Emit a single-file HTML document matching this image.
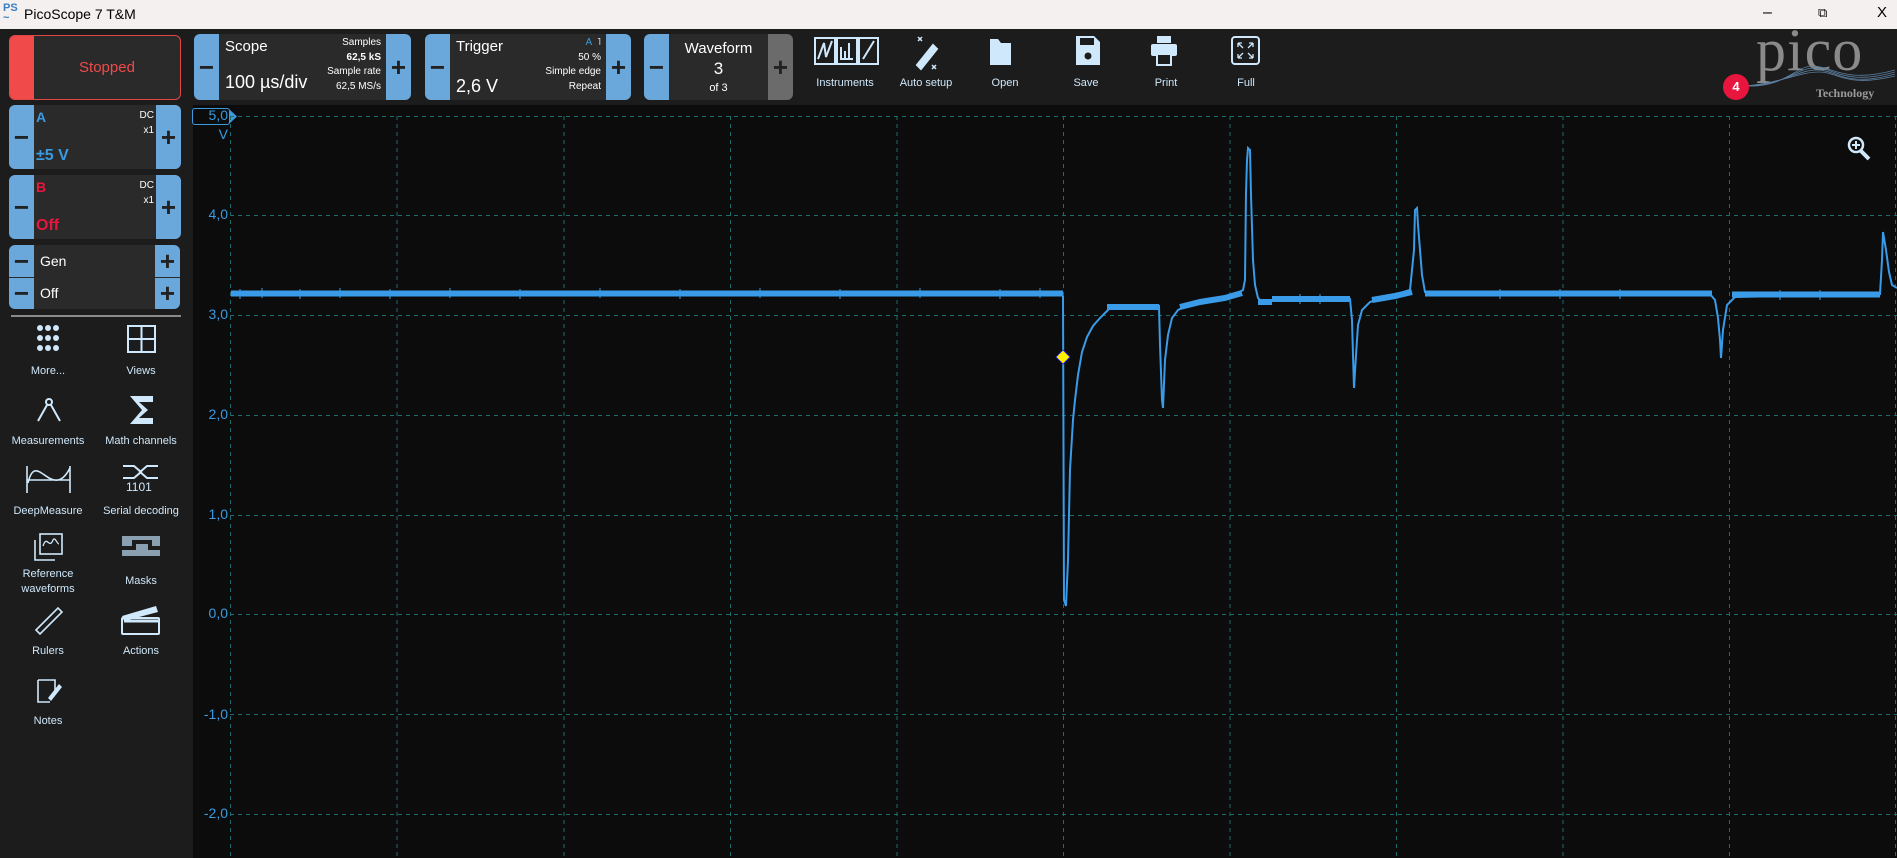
<!DOCTYPE html>
<html><head><meta charset="utf-8"><style>
*{margin:0;padding:0;box-sizing:border-box}
body{width:1897px;height:858px;overflow:hidden;background:#1c1c1c;font-family:"Liberation Sans",sans-serif;position:relative;color:#fff}
.a{position:absolute}
.title{left:0;top:0;width:1897px;height:29px;background:#f3f0ef;color:#000;font-size:14px}
.box{position:absolute;background:#2a2a2a;border-radius:6px;overflow:hidden}
.bl{position:absolute;top:0;bottom:0;background:#6aa8dc;color:#222;font-size:26px;display:flex;align-items:center;justify-content:center;font-weight:bold}
.t{position:absolute;white-space:nowrap}
.lbl{position:absolute;color:#cfe8fb;font-size:11px;text-align:center;width:90px;white-space:nowrap}
.ax{position:absolute;color:#3a9be0;font-size:14px;text-align:right;width:40px}
</style></head><body>
<div class="a title">
<div class="t" style="left:3px;top:3px;color:#3a7fc0;font-size:11px;font-weight:bold;line-height:10px">PS<br>~</div>
<div class="t" style="left:24px;top:6px">PicoScope 7 T&amp;M</div>
<div class="t" style="left:1763px;top:4px;font-size:16px">–</div>
<div class="t" style="left:1818px;top:5px;font-size:13px">⧉</div>
<div class="t" style="left:1877px;top:4px;font-size:15px">X</div>
</div>

<div class="a" style="left:193px;top:105px;width:1704px;height:753px;background:#0c0c0c"></div>

<div class="box" style="left:9px;top:35px;width:172px;height:65px;border:1px solid #e04848;background:#2a2a2a">
<div class="a" style="left:0;top:0;bottom:0;width:24px;background:#f14a4a"></div>
<div class="t" style="left:24px;right:0;top:23px;text-align:center;color:#f14a4a;font-size:15px">Stopped</div></div>

<div class="box" style="left:194px;top:34px;width:217px;height:66px">
<div class="bl" style="left:0;width:25px">−</div><div class="bl" style="right:0;width:25px">+</div>
<div class="t" style="left:31px;top:4px;font-size:15px">Scope</div>
<div class="t" style="left:31px;top:38px;font-size:18px">100 µs/div</div>
<div class="t" style="right:30px;top:2px;font-size:10px;text-align:right;line-height:14.5px">Samples<br><b>62,5 kS</b><br>Sample rate<br>62,5 MS/s</div></div>

<div class="box" style="left:425px;top:34px;width:206px;height:66px">
<div class="bl" style="left:0;width:25px">−</div><div class="bl" style="right:0;width:25px">+</div>
<div class="t" style="left:31px;top:4px;font-size:15px">Trigger</div>
<div class="t" style="left:31px;top:42px;font-size:18px">2,6 V</div>
<div class="t" style="right:30px;top:2px;font-size:10px;text-align:right;line-height:14.5px"><span style="color:#3a9be0">A</span> &nbsp;˥<br>50 %<br>Simple edge<br>Repeat</div></div>

<div class="box" style="left:644px;top:34px;width:149px;height:66px">
<div class="bl" style="left:0;width:25px">−</div><div class="bl" style="right:0;width:25px;background:#6b6b6b">+</div>
<div class="t" style="left:25px;right:25px;top:6px;text-align:center;font-size:15px">Waveform</div>
<div class="t" style="left:25px;right:25px;top:25px;text-align:center;font-size:17px">3</div>
<div class="t" style="left:25px;right:25px;top:48px;text-align:center;font-size:11px">of 3</div></div>

<svg class="a" style="left:800px;top:29px" width="480" height="50" viewBox="0 0 480 50" fill="none" stroke="#cfe8fb" stroke-width="2">
<rect x="15" y="9" width="20" height="26"/><rect x="37" y="9" width="20" height="26"/><rect x="59" y="9" width="19" height="26"/>
<path d="M18 30 L24 14 L26 28 L32 12"/><path d="M41 30 V18 M45 30 V22 M49 30 V14 M53 30 H40"/><path d="M63 30 L74 12"/>
<path d="M117 36 L133 16 L137 20 L121 40 Z" fill="#cfe8fb"/><path d="M118 8 l4 4 m0-4 l-4 4 M132 36 l4 4 m0-4 l-4 4" stroke-width="1.5"/>
<path d="M190 10 h8 l3 4 h10 v22 h-21 Z" fill="#cfe8fb" stroke="none"/>
<path d="M276 7 h18 l6 6 v23 h-24 Z" fill="#cfe8fb" stroke="none"/><circle cx="288" cy="27" r="3.5" fill="#1c1c1c" stroke="none"/><rect x="280" y="9" width="14" height="7" fill="#1c1c1c" stroke="none"/>
<rect x="357" y="7" width="14" height="7" fill="#cfe8fb" stroke="none"/><rect x="351" y="15" width="26" height="12" rx="2" fill="#cfe8fb" stroke="none"/><rect x="357" y="25" width="14" height="11" fill="#1c1c1c" stroke="#cfe8fb"/>
<rect x="432" y="8" width="27" height="27" rx="3"/><path d="M438 14 l5 5 M438 14 h4 M438 14 v4 M453 14 l-5 5 M453 14 h-4 M453 14 v4 M438 29 l5-5 M438 29 h4 M438 29 v-4 M453 29 l-5-5 M453 29 h-4 M453 29 v-4" stroke-width="1.3"/>
</svg>
<div class="lbl" style="left:800px;top:77px">Instruments</div>
<div class="lbl" style="left:881px;top:77px">Auto setup</div>
<div class="lbl" style="left:960px;top:77px">Open</div>
<div class="lbl" style="left:1041px;top:77px">Save</div>
<div class="lbl" style="left:1121px;top:77px">Print</div>
<div class="lbl" style="left:1201px;top:77px">Full</div>

<div class="t" style="left:1756px;top:20px;font-family:'Liberation Serif',serif;font-size:60px;line-height:60px;color:#8a8a8a;letter-spacing:1px">pico</div>
<svg class="a" style="left:1745px;top:66px" width="152" height="26"><g fill="none" stroke="#5b7e9e" stroke-width="0.8">
<path d="M0 20 C40 20 50 2 70 2 S100 20 150 6"/><path d="M0 20 C40 18 52 4 72 4 S100 22 150 8"/><path d="M0 20 C40 16 54 6 74 6 S100 22 150 10"/><path d="M0 20 C40 22 50 0 68 0 S100 18 150 4"/></g></svg>
<div class="t" style="left:1816px;top:86px;font-family:'Liberation Serif',serif;font-size:12px;color:#9a9a9a;font-weight:bold">Technology</div>
<div class="a" style="left:1723px;top:74px;width:26px;height:26px;border-radius:50%;background:#e8163e;color:#fff;font-size:13px;font-weight:bold;text-align:center;line-height:26px">4</div>

<div class="box" style="left:9px;top:105px;width:172px;height:64px">
<div class="bl" style="left:0;width:25px">−</div><div class="bl" style="right:0;width:25px">+</div>
<div class="t" style="left:27px;top:4px;color:#3a9be0;font-size:14px;font-weight:bold">A</div>
<div class="t" style="left:27px;top:42px;color:#3a9be0;font-size:16px;font-weight:bold">±5 V</div>
<div class="t" style="right:27px;top:3px;font-size:10px;text-align:right;line-height:15px">DC<br>x1</div></div>
<div class="box" style="left:9px;top:175px;width:172px;height:64px">
<div class="bl" style="left:0;width:25px">−</div><div class="bl" style="right:0;width:25px">+</div>
<div class="t" style="left:27px;top:4px;color:#e8163e;font-size:14px;font-weight:bold">B</div>
<div class="t" style="left:27px;top:42px;color:#e8163e;font-size:16px;font-weight:bold">Off</div>
<div class="t" style="right:27px;top:3px;font-size:10px;text-align:right;line-height:15px">DC<br>x1</div></div>
<div class="box" style="left:9px;top:245px;width:171px;height:64px">
<div class="bl" style="left:0;width:25px;bottom:32px">−</div><div class="bl" style="right:0;width:25px;bottom:32px">+</div>
<div class="bl" style="left:0;width:25px;top:33px">−</div><div class="bl" style="right:0;width:25px;top:33px">+</div>
<div class="t" style="left:31px;top:8px;font-size:14px">Gen</div>
<div class="t" style="left:31px;top:40px;font-size:14px">Off</div></div>
<div class="a" style="left:11px;top:315px;width:170px;height:2px;background:#8a8a8a"></div>

<svg class="a" style="left:0;top:318px" width="190" height="400" fill="none" stroke="#cfe8fb" stroke-width="2">
<g fill="#cfe8fb" stroke="none"><circle cx="40" cy="10" r="3"/><circle cx="48" cy="10" r="3"/><circle cx="56" cy="10" r="3"/><circle cx="40" cy="20" r="3"/><circle cx="48" cy="20" r="3"/><circle cx="56" cy="20" r="3"/><circle cx="40" cy="30" r="3"/><circle cx="48" cy="30" r="3"/><circle cx="56" cy="30" r="3"/></g>
<rect x="128" y="8" width="27" height="26"/><path d="M141.5 8 V34 M128 21 H155"/>
<circle cx="49" cy="84" r="3"/><path d="M47 87 L38 103 M51 87 L60 103"/>
<path d="M130 78 H153 V84 L139 84 L148 92 L139 100 L153 100 V106 H130 L142 92 Z" fill="#cfe8fb" stroke="none"/>
<path d="M27 148 V175 M70 148 V175 M27 162 H70 M28 165 C36 130 52 185 70 150" stroke-width="1.6"/>
<path d="M123 148 H134 L141 154 L134 160 H123 M158 148 H147 L140 154 L147 160 H158" stroke-width="2"/>
<rect x="40" y="216" width="22" height="20" stroke-width="1.6"/><path d="M35 222 V242 H55" stroke-width="1.6"/><path d="M43 228 C47 216 49 232 53 222 C55 218 57 226 59 226" stroke-width="1.3"/>
<path d="M122 218 H160 V228 H152 V222 H132 V228 H122 Z M122 232 H136 V226 H148 V232 H160 V238 H122 Z" fill="#8aa0b0" stroke="none"/>
<path d="M36 312 L58 290 L62 294 L40 316 Z" stroke-width="1.6"/>
<rect x="122" y="300" width="37" height="16" rx="1"/><path d="M122 298 L156 288 L158 294 L124 303 Z" fill="#cfe8fb" stroke="none"/><path d="M124 303 H158" stroke-width="3"/>
<path d="M38 362 H55 V372 M38 362 V384 H50" stroke-width="1.6"/><path d="M48 380 L59 366 L62 369 L51 383 Z" fill="#cfe8fb" stroke="none"/>
</svg>
<div class="lbl" style="left:3px;top:365px">More...</div>
<div class="lbl" style="left:96px;top:365px">Views</div>
<div class="lbl" style="left:3px;top:435px">Measurements</div>
<div class="lbl" style="left:96px;top:435px">Math channels</div>
<div class="lbl" style="left:3px;top:505px">DeepMeasure</div>
<div class="lbl" style="left:96px;top:505px">Serial decoding</div>
<div class="t" style="left:126px;top:480px;font-size:12px;color:#cfe8fb">1101</div>
<div class="lbl" style="left:3px;top:567px;line-height:15px">Reference<br>waveforms</div>
<div class="lbl" style="left:96px;top:575px">Masks</div>
<div class="lbl" style="left:3px;top:645px">Rulers</div>
<div class="lbl" style="left:96px;top:645px">Actions</div>
<div class="lbl" style="left:3px;top:715px">Notes</div>

<div class="a" style="left:192px;top:108px;width:38px;height:17px;border:1px solid #3a9be0;border-radius:3px"></div>
<svg class="a" style="left:229px;top:109px" width="10" height="15"><path d="M0 0 L8 7.5 L0 15Z" fill="#3a9be0"/></svg>
<div class="ax" style="left:188px;top:107px">5,0</div>
<div class="ax" style="left:188px;top:126px">V</div>
<div class="ax" style="left:188px;top:206px">4,0</div>
<div class="ax" style="left:188px;top:306px">3,0</div>
<div class="ax" style="left:188px;top:406px">2,0</div>
<div class="ax" style="left:188px;top:506px">1,0</div>
<div class="ax" style="left:188px;top:605px">0,0</div>
<div class="ax" style="left:188px;top:706px">-1,0</div>
<div class="ax" style="left:188px;top:805px">-2,0</div>

<svg class="a" style="left:0;top:0" width="1897" height="858">
<g stroke="#1e6b6b" stroke-width="1" stroke-dasharray="4 4">
<path d="M230.5 116V858M397 116V858M564 116V858M730.5 116V858M897 116V858M1063.5 116V858M1230 116V858M1396.5 116V858M1563 116V858M1729.5 116V858M1895.5 116V858"/>
<path d="M230 116.5H1897M230 215.5H1897M230 315.5H1897M230 415.5H1897M230 515.5H1897M230 614.5H1897M230 714.5H1897M230 814.5H1897"/>
</g>
<g stroke="#3a9be8" fill="none">
<path d="M231 293.5H1063M1107 307H1159M1180 307L1200 302L1225 298L1242 293M1258 302H1272M1272 299H1350M1372 300L1395 296L1412 292M1425 293.5H1712M1732 294.5H1880" stroke-width="6"/>
<path d="M1063 296 L1064 600 L1066 606 L1068 560 L1070 470 L1073 420 L1075 400 L1078 375 L1082 352 L1087 337 L1093 326 L1100 318 L1106 312 L1112 306 L1159 306 L1160 345 L1162 400 L1163 408 L1165 360 L1168 335 L1172 318 L1178 310 L1190 304 L1205 300 L1225 297 L1238 293 L1243 290 L1245 280 L1246 193 L1247 160 L1248 148 L1250 150 L1251 195 L1253 260 L1255 285 L1258 298 L1262 302 L1270 300 L1350 299 L1352 320 L1353 355 L1354 388 L1356 355 L1358 325 L1362 310 L1370 302 L1385 297 L1400 293 L1410 290 L1414 250 L1415 210 L1417 208 L1418 225 L1420 250 L1422 275 L1425 292 L1710 294 L1715 300 L1718 318 L1720 340 L1721 358 L1723 330 L1727 305 L1735 297 L1880 294 L1882 260 L1883 232 L1886 250 L1889 272 L1892 285 L1897 288" stroke-width="2"/>
<path d="M240 289v10M262 288v10M300 289v10M340 288v10M390 289v10M450 288v10M520 289v10M600 288v10M680 289v10M760 288v10M840 289v10M920 288v10M1000 289v10M1040 288v10M1300 294v10M1320 294v10M1500 289v10M1560 289v10M1620 289v10M1780 290v10M1820 290v10" stroke-width="1"/>
</g>
<path d="M1063 350 L1070 357 L1063 364 L1056 357Z" fill="#ffee00" stroke="#1a1aff" stroke-width="0.8"/>
<g stroke="#cfe8fb" fill="none"><circle cx="1856" cy="145" r="7" stroke-width="2.5"/><path d="M1861 151 L1869 159" stroke-width="4"/><path d="M1856 141v8M1852 145h8" stroke-width="2"/></g>
</svg>
</body></html>
